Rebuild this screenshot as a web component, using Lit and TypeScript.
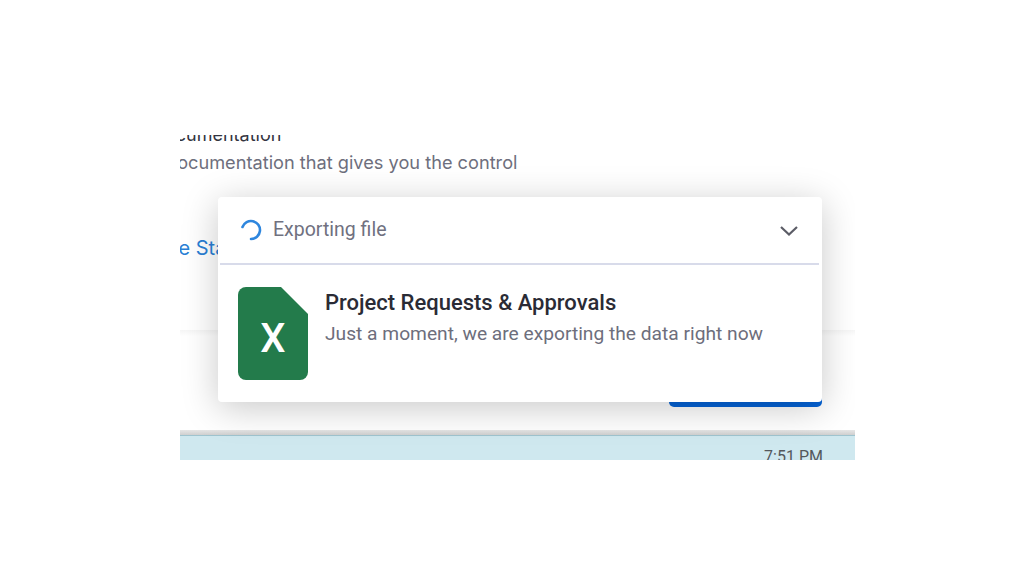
import { LitElement, html, css } from "lit";
import { customElement } from "lit/decorators.js";

@customElement("export-toast")
export class ExportToast extends LitElement {
    static styles = css`
        :host {
            position: absolute;
            left: 38px;
            top: 62px;
            width: 604px;
            height: 205px;
            display: block;
            background: #fff;
            border-radius: 4px;
            box-shadow: 0 6px 36px rgba(0, 0, 0, 0.22);
            font-family: Roboto, sans-serif;
        }

        .head {
            height: 66px;
            margin: 0 3px 0 2px;
            padding: 0 20px;
            display: flex;
            align-items: center;
            border-bottom: 2px solid #d8dbea;
        }

        .spinner {
            width: 22px;
            height: 22px;
            margin-right: 11px;
        }

        .status {
            flex: 1;
            font-size: 19.5px;
            line-height: 22px;
            color: #70717f;
        }

        .chevron {
            width: 20px;
            height: 12px;
            margin-top: 1px;
        }

        .body {
            padding: 22px 0 0 20px;
            display: flex;
            gap: 17px;
        }

        .sheet {
            width: 70px;
            height: 93px;
            flex: none;
        }

        .sheet text {
            font-family: Roboto, sans-serif;
            font-size: 40px;
            font-weight: 500;
            fill: #fff;
        }

        .title {
            margin-top: 3px;
            font-size: 22px;
            line-height: 26px;
            font-weight: 500;
            color: #2a2b35;
        }

        .note {
            margin-top: 6px;
            font-size: 19.2px;
            line-height: 24px;
            color: #6d6e7c;
        }
    `;

    render() {
        return html`
            <div class="head">
                <svg class="spinner" viewBox="0 0 22 22" fill="none">
                    <path d="M2.5 8A9 9 0 1 1 11 20" stroke="#2e86de" stroke-width="2.6" stroke-linecap="round"/>
                </svg>
                <span class="status">Exporting file</span>
                <svg class="chevron" viewBox="0 0 20 12" fill="none">
                    <path d="M2 2l8 7.5 8-7.5" stroke="#5b5c66" stroke-width="2.2"/>
                </svg>
            </div>
            <div class="body">
                <svg class="sheet" viewBox="0 0 70 93">
                    <path d="M8 0H43L70 27V85a8 8 0 0 1-8 8H8a8 8 0 0 1-8-8V8a8 8 0 0 1 8-8z" fill="#237b4b"/>
                    <text x="35" y="65" text-anchor="middle">X</text>
                </svg>
                <div>
                    <div class="title">Project Requests &amp; Approvals</div>
                    <div class="note">Just a moment, we are exporting the data right now</div>
                </div>
            </div>
        `;
    }
}

@customElement("app-root")
export class AppRoot extends LitElement {
    static styles = css`
        :host {
            display: block;
            width: 1035px;
            height: 582px;
            background: #fff;
            overflow: hidden;
        }

        .frame {
            position: relative;
            margin: 135px 0 0 180px;
            width: 675px;
            height: 325px;
            overflow: hidden;
            display: flex;
            flex-direction: column;
            font-family: Inter, sans-serif;
        }

        .intro {
            height: 195px;
            overflow: hidden;
        }

        .clipped {
            margin-top: -12px;
            margin-left: -28px;
            font-size: 18px;
            line-height: 24px;
            color: #33343f;
            white-space: nowrap;
        }

        .lead {
            margin-top: 3px;
            margin-left: -16px;
            font-size: 18.2px;
            line-height: 24px;
            color: #6e6f7d;
            white-space: nowrap;
        }

        .link {
            margin-top: 61px;
            margin-left: -27px;
            font-size: 20px;
            line-height: 26px;
            color: #2a7fd5;
            white-space: nowrap;
        }

        .actions {
            flex: 1;
            display: flex;
            justify-content: flex-end;
            padding-right: 33px;
            background: linear-gradient(#f6f6f6, #fff 6px);
        }

        .button {
            width: 153px;
            height: 77px;
            background: #0563d6;
            border-radius: 5px;
        }

        .rule {
            height: 5px;
            background: linear-gradient(#e6e6e6, #cfcfcf);
        }

        .bar {
            height: 25px;
            background: #cfe8ef;
            border-top: 1px solid #9fc4cf;
            display: flex;
            justify-content: flex-end;
            box-sizing: border-box;
            padding: 11px 32px 0 0;
            font-family: Roboto, sans-serif;
            font-size: 16px;
            line-height: 20px;
            color: #54585c;
        }
    `;

    render() {
        return html`
            <div class="frame">
                <div class="intro">
                    <div class="clipped">Documentation</div>
                    <div class="lead">Documentation that gives you the control</div>
                    <div class="link">Use Start</div>
                </div>
                <div class="actions"><div class="button"></div></div>
                <div class="rule"></div>
                <div class="bar"><span>7:51 PM</span></div>
                <export-toast></export-toast>
            </div>
        `;
    }
}
